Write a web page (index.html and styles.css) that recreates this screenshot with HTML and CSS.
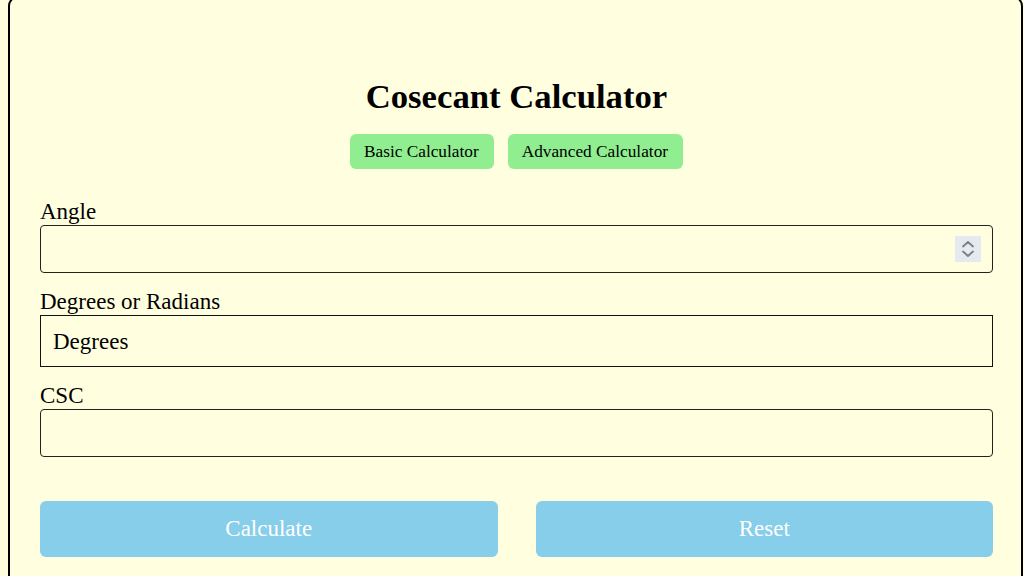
FILE: index.html
```html
<!DOCTYPE html>
<html lang="en">
<head>
<meta charset="utf-8">
<title>Cosecant Calculator</title>
<link rel="stylesheet" href="styles.css">
</head>
<body>
<div class="container">
  <h1 class="title">Cosecant Calculator</h1>
  <div class="modes">
    <button class="mode-btn" type="button">Basic Calculator</button>
    <button class="mode-btn" type="button">Advanced Calculator</button>
  </div>
  <form class="form">
    <div class="field">
      <label class="label" for="angle">Angle</label>
      <div class="number-wrap">
        <input class="input" id="angle" type="number">
        <span class="spinner" aria-hidden="true">
          <svg width="26" height="26" viewBox="0 0 26 26">
            <path d="M8 10.5 L13 6 L18 10.5" fill="none" stroke="#7b7f84" stroke-width="1.8" stroke-linecap="round" stroke-linejoin="round"/>
            <path d="M8 15.5 L13 20 L18 15.5" fill="none" stroke="#7b7f84" stroke-width="1.8" stroke-linecap="round" stroke-linejoin="round"/>
          </svg>
        </span>
      </div>
    </div>
    <div class="field">
      <label class="label" for="unit">Degrees or Radians</label>
      <select class="select" id="unit">
        <option>Degrees</option>
        <option>Radians</option>
      </select>
    </div>
    <div class="field">
      <label class="label" for="csc">CSC</label>
      <input class="input" id="csc" type="text">
    </div>
    <div class="actions">
      <button class="action-btn" type="button">Calculate</button>
      <button class="action-btn" type="button">Reset</button>
    </div>
  </form>
</div>
</body>
</html>
```
FILE: styles.css
```css
html, body {
  margin: 0;
  padding: 0;
  background: #ffffe0;
  font-family: "Liberation Serif", "Times New Roman", serif;
  color: #000;
}

.container {
  margin: -4px 1px 0 8px;
  border: 2px solid #000;
  border-radius: 10px;
  background: #ffffe0;
  padding: 79px 28px 40px 30px;
}

.title {
  margin: 0;
  text-align: center;
  font-size: 34.7px;
  line-height: 40px;
  font-weight: bold;
}

.modes {
  display: flex;
  justify-content: center;
  gap: 14px;
  margin-top: 17px;
}

.mode-btn {
  font-family: inherit;
  font-size: 17.3px;
  line-height: 20px;
  padding: 7.5px 15px 7.5px 14px;
  background: #90ee90;
  color: #000;
  border: none;
  border-radius: 6px;
}

.form {
  margin-top: 30px;
}

.field {
  margin-top: 16px;
}

.label {
  display: block;
  font-size: 23px;
  line-height: 26px;
}

.number-wrap {
  position: relative;
}

.input {
  display: block;
  width: 100%;
  box-sizing: border-box;
  height: 48px;
  border: 1px solid #222;
  border-radius: 4px;
  background: #ffffe0;
  font-family: inherit;
  font-size: 23px;
  padding: 0 12px;
  -moz-appearance: textfield;
}

.input::-webkit-outer-spin-button,
.input::-webkit-inner-spin-button {
  -webkit-appearance: none;
  margin: 0;
}

.spinner {
  position: absolute;
  right: 12px;
  top: 11px;
  width: 26px;
  height: 26px;
  background: #e4eaef;
  display: block;
}

.spinner svg {
  display: block;
}

.select {
  display: block;
  width: 100%;
  box-sizing: border-box;
  height: 52px;
  border: 1px solid #111;
  border-radius: 0;
  background: #ffffe0;
  font-family: inherit;
  font-size: 23px;
  color: #000;
  padding: 0 12px;
  -webkit-appearance: none;
  appearance: none;
}

.actions {
  display: grid;
  grid-template-columns: 1fr 1fr;
  gap: 38px;
  margin-top: 44px;
}

.action-btn {
  height: 56px;
  border: none;
  border-radius: 6px;
  background: #87ceeb;
  color: #fff;
  font-family: inherit;
  font-size: 23px;
}
```
